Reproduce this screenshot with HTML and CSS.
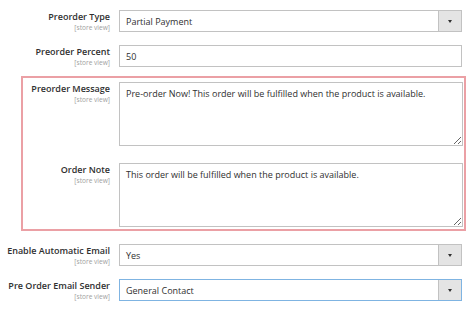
FILE: index.html
```html
<!DOCTYPE html>
<html lang="en">
<head>
<meta charset="utf-8">
<title>Preorder settings</title>
<link rel="stylesheet" href="styles.css">
</head>
<body>
<form class="form">
  <div class="row">
    <div class="label"><span class="name">Preorder Type</span><span class="scope">[store view]</span></div>
    <div class="select"><span class="value">Partial Payment</span><span class="btn"><span class="arrow"></span></span></div>
  </div>
  <div class="row">
    <div class="label"><span class="name">Preorder Percent</span><span class="scope">[store view]</span></div>
    <div class="input">50</div>
  </div>
  <div class="group">
    <div class="row">
      <div class="label"><span class="name">Preorder Message</span><span class="scope">[store view]</span></div>
      <textarea class="textarea">Pre-order Now! This order will be fulfilled when the product is available.</textarea>
    </div>
    <div class="row">
      <div class="label"><span class="name">Order Note</span><span class="scope">[store view]</span></div>
      <textarea class="textarea">This order will be fulfilled when the product is available.</textarea>
    </div>
  </div>
  <div class="row">
    <div class="label"><span class="name">Enable Automatic Email</span><span class="scope">[store view]</span></div>
    <div class="select"><span class="value">Yes</span><span class="btn"><span class="arrow"></span></span></div>
  </div>
  <div class="row">
    <div class="label"><span class="name">Pre Order Email Sender</span><span class="scope">[store view]</span></div>
    <div class="select focused"><span class="value">General Contact</span><span class="btn"><span class="arrow"></span></span></div>
  </div>
</form>
</body>
</html>
```
FILE: styles.css
```css
html, body {
  margin: 0;
  padding: 0;
  background: #ffffff;
}

body {
  font-family: "Open Sans", "Liberation Sans", sans-serif;
  color: #303030;
}

.form {
  display: flex;
  flex-direction: column;
  gap: 13px;
  padding-top: 10px;
  width: 474px;
}

.row {
  display: grid;
  grid-template-columns: 110px 343px;
  column-gap: 9px;
  align-items: start;
}

.label {
  display: flex;
  flex-direction: column;
  align-items: flex-end;
  text-align: right;
  padding-top: 1px;
}

.name {
  font-size: 9px;
  font-weight: 600;
  line-height: 12px;
  color: #303030;
  white-space: nowrap;
}

.scope {
  font-size: 6.6px;
  line-height: 9px;
  color: #a0a0a0;
  white-space: nowrap;
}

.select,
.input {
  box-sizing: border-box;
  height: 22px;
  border: 1px solid #c2c2c2;
  background: #fff;
  display: flex;
  align-items: center;
  font-size: 9px;
  color: #303030;
}

.input {
  padding-left: 6px;
}

.select .value {
  flex: 1;
  padding-left: 6px;
}

.select .btn {
  width: 22px;
  align-self: stretch;
  background: #e4e4e4;
  border-left: 1px solid #c2c2c2;
  display: flex;
  align-items: center;
  justify-content: center;
}

.arrow {
  width: 0;
  height: 0;
  border-left: 2.5px solid transparent;
  border-right: 2.5px solid transparent;
  border-top: 3px solid #303030;
}

.select.focused {
  border-color: #7fb4e2;
}

.group {
  margin: -4px 8px 0 21px;
  border: 2px solid #eba0a5;
  padding: 4px 0 2px;
  display: flex;
  flex-direction: column;
  gap: 17px;
}

.group .row {
  grid-template-columns: 87px 344px;
}

.textarea {
  box-sizing: border-box;
  height: 64px;
  width: 344px;
  margin: 0;
  border: 1px solid #c2c2c2;
  border-radius: 0;
  padding: 4px 6px;
  font-family: "Open Sans", "Liberation Sans", sans-serif;
  font-size: 9px;
  line-height: 13px;
  color: #303030;
  resize: vertical;
  outline: none;
}
```
